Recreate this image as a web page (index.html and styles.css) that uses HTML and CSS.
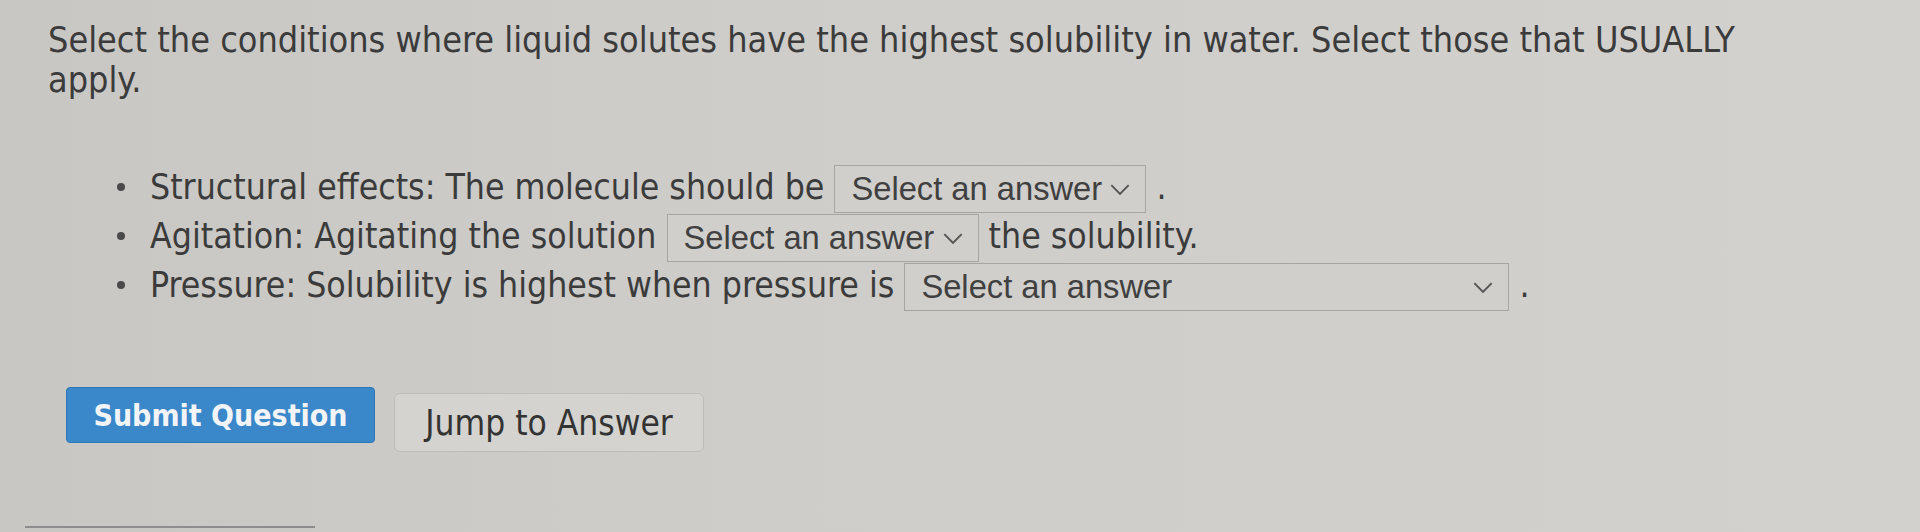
FILE: index.html
```html
<!DOCTYPE html>
<html lang="en">
<head>
<meta charset="UTF-8" />
<title>Question</title>
<link rel="stylesheet" href="styles.css">
</head>
<body>

<div class="question">
  <p class="prompt">Select the conditions where liquid solutes have the highest solubility in water. Select those that USUALLY apply.</p>

  <ul class="parts">
    <li>Structural effects: The molecule should be <span class="dropdown short"><span class="label">Select an answer</span><svg viewBox="0 0 20 12" class="chev"><polyline points="2,2 10,10 18,2"/></svg></span> .</li>
    <li>Agitation: Agitating the solution <span class="dropdown short"><span class="label">Select an answer</span><svg viewBox="0 0 20 12" class="chev"><polyline points="2,2 10,10 18,2"/></svg></span> the solubility.</li>
    <li>Pressure: Solubility is highest when pressure is <span class="dropdown long"><span class="label">Select an answer</span><svg viewBox="0 0 20 12" class="chev"><polyline points="2,2 10,10 18,2"/></svg></span> .</li>
  </ul>

  <div class="acciones">
    <button class="submit">Submit Question</button>
    <button class="jump">Jump to Answer</button>
  </div>
</div>

<div class="pie"></div>

</body>
</html>
```

FILE: styles.css
```css
body { margin: 0; height: 532px; overflow: hidden; background: linear-gradient(90deg, #c8c7c4 0%, #cecdca 40%, #d3d1ce 100%); font-family: "DejaVu Sans Condensed", "DejaVu Sans", sans-serif; font-stretch: condensed; color: #3b3b3b; }
.question { padding: 20px 0 0 48px; }
.prompt { margin: 0; width: 1760px; font-size: 35.7px; line-height: 40px; }
.parts { list-style: none; margin: 62px 0 0 0; padding: 0 0 0 102px; font-size: 35.3px; }
.parts li { position: relative; height: 49px; line-height: 49px; white-space: nowrap; }
.parts li::before { content: ""; position: absolute; left: -33px; top: 21px; width: 8px; height: 8px; border-radius: 50%; background: #4a4a4a; }
.dropdown { display: inline-flex; align-items: center; justify-content: space-between; box-sizing: border-box; height: 48px; padding: 0 14px 0 16px; vertical-align: middle; border: 1px solid #a6a5a2; background: #d0cfcc; font-family: "Liberation Sans", Arial, sans-serif; font-stretch: normal; font-size: 32.7px; color: #404040; line-height: 46px; }
.dropdown.short { width: 312px; }
.dropdown.long { width: 605px; }
.chev { width: 22px; height: 13px; fill: none; stroke: #555; stroke-width: 1.8; }
.acciones { display: flex; align-items: flex-start; gap: 19px; margin: 78px 0 0 18px; }
button { height: 56px; padding: 0; border-radius: 4px; font-family: "DejaVu Sans Condensed", "DejaVu Sans", sans-serif; font-stretch: condensed; cursor: pointer; }
.submit { width: 309px; background: #3a87c9; border: 1px solid #2f76b3; color: #f2f4f7; font-weight: bold; font-size: 30px; }
.jump { width: 310px; height: 59px; margin-top: 6px; border-radius: 6px; background: #d4d3d0; border: 1px solid #bdbcb9; color: #333; font-size: 35px; }
.pie { position: absolute; left: 25px; top: 526px; width: 290px; height: 2px; background: #8e8c8c; }
```
